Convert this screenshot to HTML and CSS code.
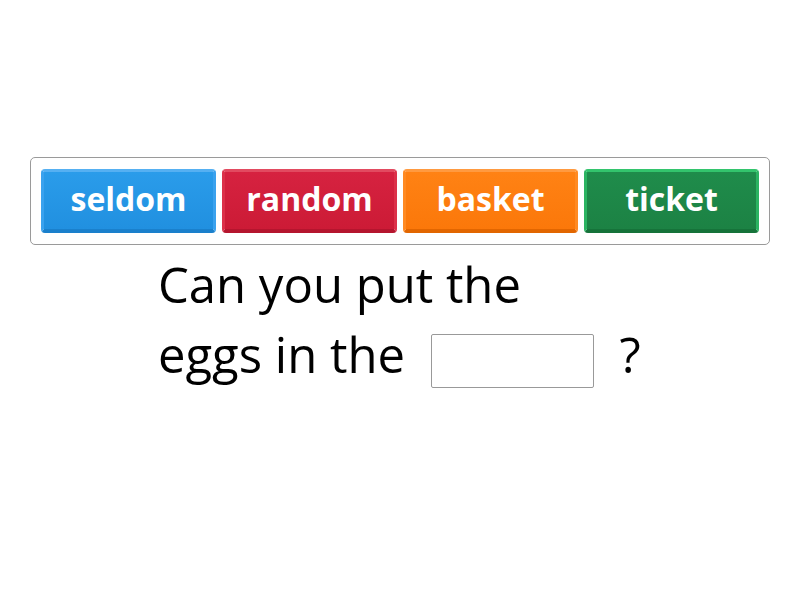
FILE: index.html
```html
<!DOCTYPE html>
<html>
<head>
<meta charset="utf-8">
<link rel="stylesheet" href="styles.css">
</head>
<body>
<div class="page">
  <div class="bank">
    <div class="tile blue">seldom</div>
    <div class="tile red">random</div>
    <div class="tile orange">basket</div>
    <div class="tile green">ticket</div>
  </div>
  <div class="sentence">
    <div class="line">Can you put the</div>
    <div class="line">eggs in the <span class="blank"></span> ?</div>
  </div>
</div>
</body>
</html>
```
FILE: styles.css
```css
html, body {
  margin: 0;
  padding: 0;
  background: #fff;
}
.page {
  width: 800px;
  height: 600px;
  padding-top: 157px;
  box-sizing: border-box;
  font-family: "Open Sans", sans-serif;
}
.bank {
  margin-left: 30px;
  width: 740px;
  box-sizing: border-box;
  border: 1px solid #9a9a9a;
  border-radius: 5px;
  padding: 11px 10px;
  display: flex;
  gap: 6px;
}
.tile {
  width: 175px;
  height: 64px;
  box-sizing: border-box;
  border-radius: 4px;
  display: flex;
  align-items: center;
  justify-content: center;
  color: #fff;
  font-weight: 700;
  font-size: 32px;
  padding-bottom: 5px;
  border-style: solid;
  border-width: 3px 3px 4px 3px;
}
.blue {
  background: linear-gradient(#2a9cea, #2190e0);
  border-color: #55b0f2 #3aa2ee #1a80cc #3aa2ee;
}
.red {
  background: linear-gradient(#d62240, #cc1b36);
  border-color: #e24a60 #dc3049 #b5152e #dc3049;
}
.orange {
  background: linear-gradient(#ff8214, #fb780a);
  border-color: #ff9a40 #ff8a22 #e26600 #ff8a22;
}
.green {
  background: linear-gradient(#1f8c4b, #1c8244);
  border-color: #33c46d #2bb462 #16733a #2bb462;
}
.sentence {
  margin: 4px 0 0 158px;
  font-size: 49px;
  line-height: 70px;
  color: #000;
}
.line {
  white-space: nowrap;
}
.blank {
  display: inline-block;
  width: 163px;
  height: 54px;
  box-sizing: border-box;
  border: 1px solid #999;
  border-radius: 2px;
  vertical-align: -15px;
  margin: 0 13px;
}
```
